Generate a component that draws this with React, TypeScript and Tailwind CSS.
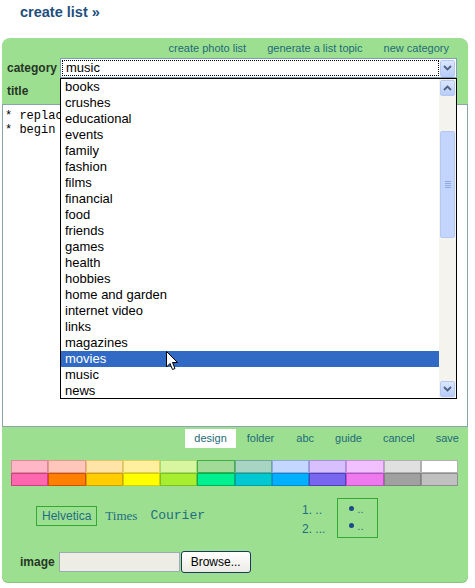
import React from "react"

const categories = [
    "books", "crushes", "educational", "events", "family", "fashion", "films", "financial",
    "food", "friends", "games", "health", "hobbies", "home and garden", "internet video",
    "links", "magazines", "movies", "music", "news",
]

const topRow = [
    "bg-[#ffb6c6] border-[#e08898]",
    "bg-[#ffc6bc] border-[#e09a8a]",
    "bg-[#ffe4a8] border-[#e8c070]",
    "bg-[#fff0a0] border-[#e0d060]",
    "bg-[#d8f5a0] border-[#a8d870]",
    "bg-[#a2da98] border-[#40b040]",
    "bg-[#a8d4c4] border-[#70a898]",
    "bg-[#c4d8ff] border-[#90a8e0]",
    "bg-[#d8c0ff] border-[#a890e0]",
    "bg-[#f0c0ff] border-[#c890e0]",
    "bg-[#e0e0e0] border-[#b0b0b0]",
    "bg-[#ffffff] border-[#b0b0b0]",
]

const bottomRow = [
    "bg-[#ff66b0] border-[#d04080]",
    "bg-[#ff8000] border-[#d05000]",
    "bg-[#ffcc00] border-[#d0a000]",
    "bg-[#ffff00] border-[#d0d000]",
    "bg-[#a8ee30] border-[#80c020]",
    "bg-[#00f090] border-[#00b060]",
    "bg-[#00c8d0] border-[#00a0a8]",
    "bg-[#00b0ff] border-[#0088d0]",
    "bg-[#7866ee] border-[#5040c0]",
    "bg-[#ee78ee] border-[#c050c0]",
    "bg-[#a0a0a0] border-[#808080]",
    "bg-[#c0c0c0] border-[#909090]",
]

const Chevron = ({ up }: { up?: boolean }) => (
    <svg width="9" height="6" viewBox="0 0 9 6">
        <path d={up ? "M1 5 L4.5 1.5 L8 5" : "M1 1 L4.5 4.5 L8 1"} fill="none" stroke="#4d6185" strokeWidth="1.8" />
    </svg>
)

const XpButton = ({ up, className = "" }: { up?: boolean; className?: string }) => (
    <div className={"flex items-center justify-center w-[15px] h-[16px] rounded-[2px] border border-[#b4c8f4] bg-gradient-to-b from-[#dce6fe] to-[#b8cdf8] " + className}>
        <Chevron up={up} />
    </div>
)

const Cursor = () => (
    <svg className="absolute left-[105px] top-[272px]" width="13" height="21" viewBox="0 0 13 21">
        <path d="M0.5 0.5 L0.5 16 L4 12.5 L6.5 18.5 L9 17.5 L6.5 11.5 L11.5 11.5 Z" fill="#fff" stroke="#000" strokeWidth="1" />
    </svg>
)

const App: React.FC = () => (
    <div className="relative w-[475px] h-[588px] bg-white overflow-hidden" style={{ fontFamily: '"Liberation Sans", Arial, sans-serif' }}>
        <div className="h-[38px] pl-[20px] pt-[2px]">
            <h1 className="text-[14.5px] font-bold text-[#1f4f7c]">create list »</h1>
        </div>

        <div className="ml-[2px] w-[466px] bg-[#9ddf90] rounded-t-[8px] rounded-b-[6px] shadow-[0_1px_0_#86c47a] pb-[9px]">
            <div className="h-[20px] flex items-center justify-end gap-[21px] pr-[19px] text-[11px] text-[#1d6b78]">
                <span>create photo list</span>
                <span>generate a list topic</span>
                <span>new category</span>
            </div>

            <div className="h-[20px] flex items-center">
                <span className="w-[58px] pl-[5px] text-[12px] font-bold text-[#263626]">category</span>
                <div className="relative w-[397px] h-[20px] bg-white border border-[#7f9db9] flex items-center">
                    <div className="flex-1 h-[16px] ml-[1px] mr-[1px] border border-dotted border-black flex items-center pl-[3px] text-[13px] text-black">music</div>
                    <XpButton className="h-[17px] mr-[1px]" />

                    <div className="absolute left-[-1px] top-[19px] w-[397px] h-[321px] bg-white border border-black flex z-10">
                        <div className="flex-1 flex flex-col">
                            {categories.map((c) => (
                                <div
                                    key={c}
                                    className={"h-[16px] flex items-center pl-[4px] text-[13px] " + (c === "movies" ? "bg-[#316ac5] text-white" : "text-black")}
                                >
                                    {c}
                                </div>
                            ))}
                        </div>
                        <div className="w-[17px] bg-[#f4f3ee] flex flex-col items-center pt-[1px] pb-[1px]">
                            <XpButton up />
                            <div className="mt-[35px] w-[15px] h-[107px] rounded-[2px] border border-[#b4c8f4] bg-[#c3d5fc] flex flex-col items-center justify-center gap-[1px]">
                                <div className="w-[6px] h-[1px] bg-[#8fa8e0]" />
                                <div className="w-[6px] h-[1px] bg-[#8fa8e0]" />
                                <div className="w-[6px] h-[1px] bg-[#8fa8e0]" />
                                <div className="w-[6px] h-[1px] bg-[#8fa8e0]" />
                            </div>
                            <div className="flex-1" />
                            <XpButton />
                        </div>
                        <Cursor />
                    </div>
                </div>
            </div>

            <div className="h-[26px] flex items-center">
                <span className="pl-[5px] text-[12px] font-bold text-[#263626]">title</span>
            </div>

            <div className="h-[323px] bg-white border border-[#8aa4ac] pt-[4px] pl-[2px] text-[12px] leading-[14px] text-black" style={{ fontFamily: '"Liberation Mono", "Courier New", monospace' }}>
                <div>* replac</div>
                <div>* begin</div>
            </div>

            <div className="mt-[2px] h-[19px] flex justify-end text-[11px] text-[#1d6b78]">
                <span className="px-[9px] flex items-center bg-white">design</span>
                <span className="px-[11px] flex items-center">folder</span>
                <span className="px-[11px] flex items-center">abc</span>
                <span className="px-[10px] flex items-center">guide</span>
                <span className="px-[11px] flex items-center">cancel</span>
                <span className="pl-[10px] pr-[9px] flex items-center">save</span>
            </div>

            <div className="mt-[12px] ml-[9px] w-[447px] grid grid-cols-12">
                {topRow.map((c, i) => (
                    <div key={"t" + i} className={"h-[13px] border " + c} />
                ))}
                {bottomRow.map((c, i) => (
                    <div key={"b" + i} className={"h-[13px] border " + c} />
                ))}
            </div>

            <div className="mt-[12px] h-[40px] flex items-start text-[#1e6e80]">
                <div className="ml-[34px] mt-[8px] flex items-center">
                    <span className="h-[20px] px-[5px] border border-[#33a833] flex items-center text-[12px]">Helvetica</span>
                    <span className="ml-[8px] text-[13px]" style={{ fontFamily: '"Liberation Serif", "Times New Roman", serif' }}>Times</span>
                    <span className="ml-[13px] text-[13px]" style={{ fontFamily: '"Liberation Mono", "Courier New", monospace' }}>Courier</span>
                </div>
                <div className="ml-[97px] mt-[3px] flex flex-col text-[12px] leading-[19px]">
                    <span>1. ..</span>
                    <span>2. ...</span>
                </div>
                <div className="ml-[12px] w-[41px] h-[40px] border border-[#33a833] flex flex-col justify-center gap-[6px] pl-[11px]">
                    <div className="flex items-end">
                        <span className="w-[5px] h-[5px] rounded-full bg-[#1a4a8a] mb-[4px]" />
                        <span className="ml-[3px] text-[11px] leading-[11px]">..</span>
                    </div>
                    <div className="flex items-end">
                        <span className="w-[5px] h-[5px] rounded-full bg-[#1a4a8a] mb-[4px]" />
                        <span className="ml-[3px] text-[11px] leading-[11px]">..</span>
                    </div>
                </div>
            </div>

            <div className="mt-[13px] h-[22px] flex items-center">
                <span className="ml-[18px] text-[12px] font-bold text-[#263626]">image</span>
                <div className="ml-[4px] w-[121px] h-[20px] bg-[#ededE6] border border-[#9aacb0]" />
                <div className="ml-[1px] w-[70px] h-[22px] rounded-[3px] border border-[#1c3a5c] bg-gradient-to-b from-[#ffffff] to-[#ecebe6] flex items-center justify-center text-[12px] text-black">
                    Browse...
                </div>
            </div>
        </div>
    </div>
)

export default App
